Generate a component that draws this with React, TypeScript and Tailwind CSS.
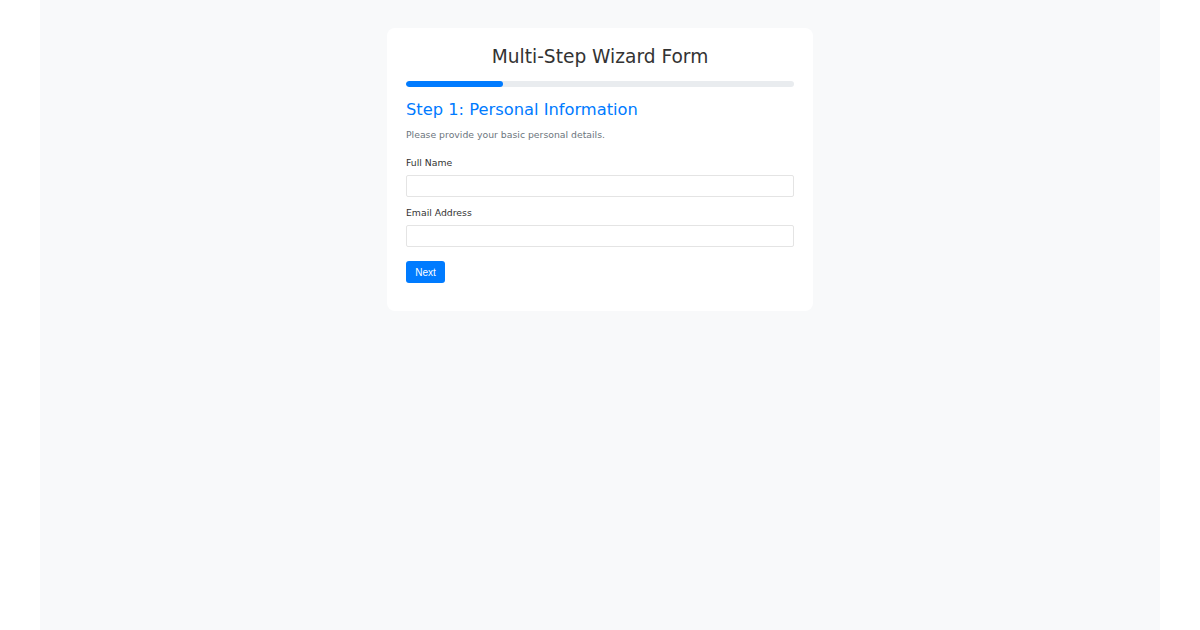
export default function App() {
    return (
        <div className="min-h-screen bg-white font-['DejaVu_Sans',sans-serif]">
            <div className="w-[1120px] mx-auto min-h-screen bg-[#f8f9fa] pt-7">
                <div className="w-[426px] mx-auto bg-white rounded-lg px-[19px] pt-[17px] pb-[28px]">
                    <h1 className="text-[18.6px] leading-[24px] text-center text-[#333]">
                        Multi-Step Wizard Form
                    </h1>
                    <div className="mt-[12px] h-[6px] w-full rounded-full bg-[#e9ecef] overflow-hidden">
                        <div className="h-full w-1/4 bg-[#007bff] rounded-full"></div>
                    </div>
                    <h2 className="mt-[13px] text-[16.3px] leading-[20px] text-[#007bff]">
                        Step 1: Personal Information
                    </h2>
                    <p className="mt-[8px] text-[9.3px] leading-[13px] text-[#6c757d]">
                        Please provide your basic personal details.
                    </p>
                    <div className="mt-[15px]">
                        <label className="block text-[9.3px] leading-[13px] text-[#333]">
                            Full Name
                        </label>
                        <input
                            type="text"
                            className="mt-[6px] block w-full h-[22px] border border-[#e4e4e4] rounded-[2px] px-2 text-[10px]"
                        />
                    </div>
                    <div className="mt-[9px]">
                        <label className="block text-[9.3px] leading-[13px] text-[#333]">
                            Email Address
                        </label>
                        <input
                            type="email"
                            className="mt-[6px] block w-full h-[22px] border border-[#e4e4e4] rounded-[2px] px-2 text-[10px]"
                        />
                    </div>
                    <button className="mt-[14px] w-[39px] h-[22px] bg-[#007bff] text-white text-[10px] rounded-[3px] font-['Liberation_Sans',sans-serif]">
                        Next
                    </button>
                </div>
            </div>
        </div>
    );
}
